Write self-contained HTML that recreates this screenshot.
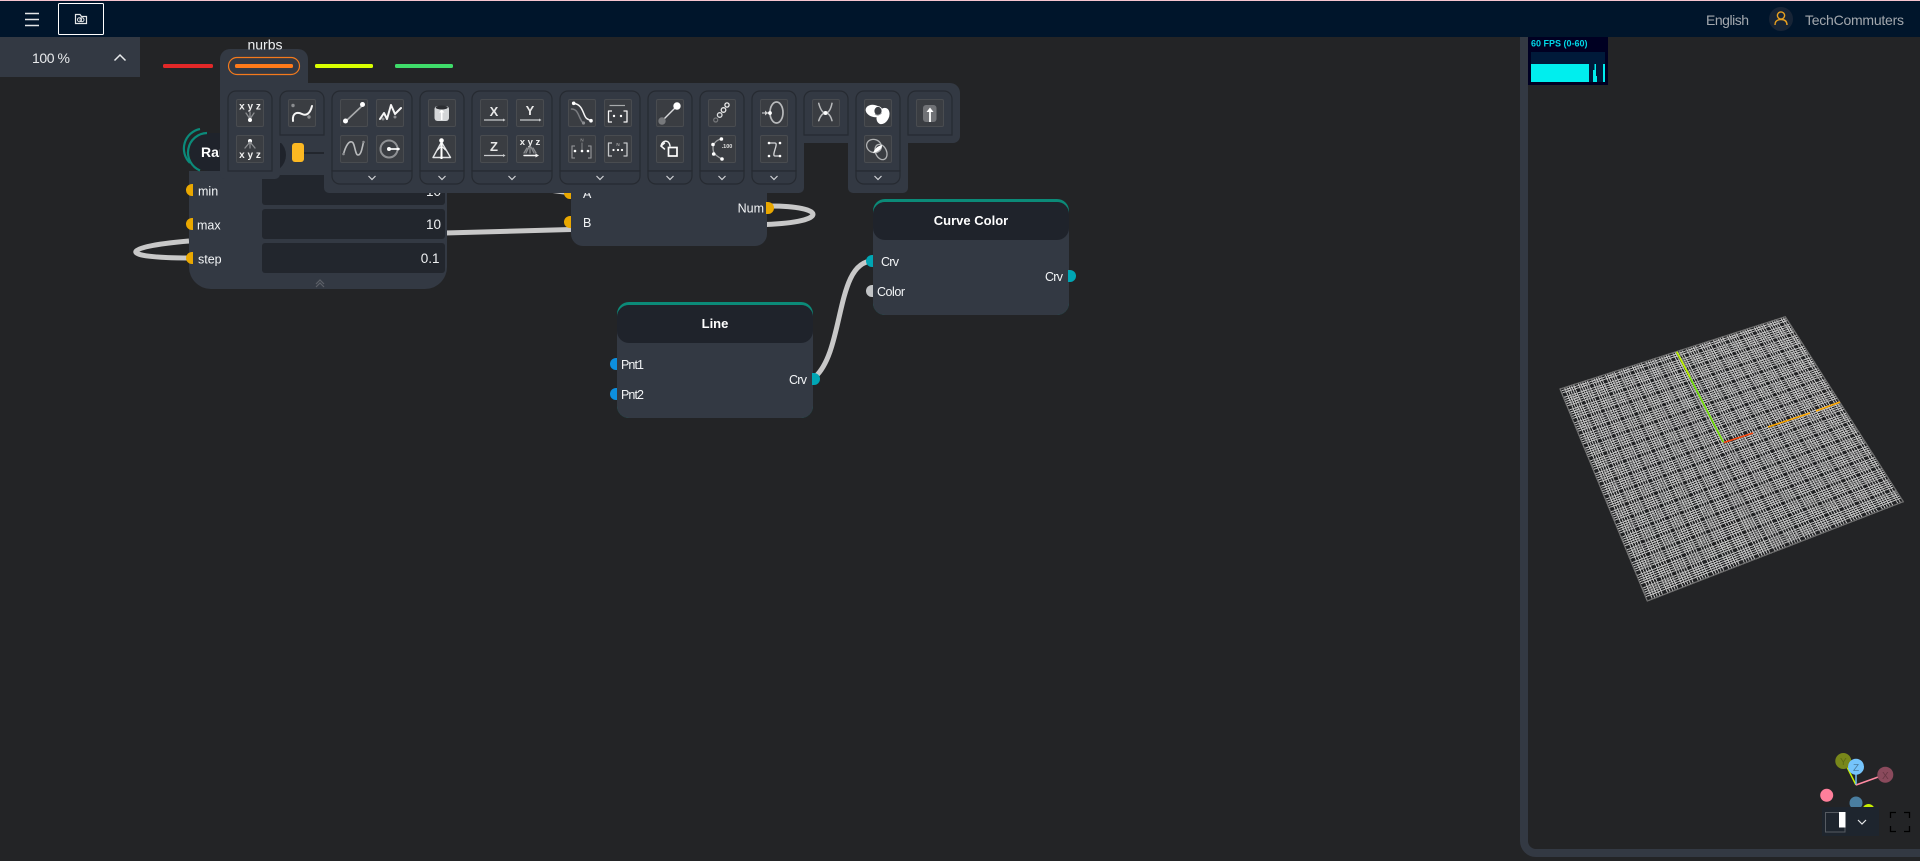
<!DOCTYPE html>
<html><head><meta charset="utf-8"><title>Editor</title>
<style>
html,body{margin:0;padding:0;width:1920px;height:861px;overflow:hidden;background:#232426}
svg{display:block;position:absolute;left:0;top:0}
text{font-family:"Liberation Sans",sans-serif}
.lb{font-size:12.5px;fill:#f2f4f6}
.ttl{font-size:13px;font-weight:700;fill:#fff;text-anchor:middle}
.val{font-size:13.5px;fill:#eef0f2;text-anchor:end}
.wire{fill:none;stroke:#c8c8c8;stroke-width:5;stroke-linecap:butt}
.grp{fill:#333943;stroke:#262a31;stroke-width:1.2}
.t{fill:#3a3d42;stroke:#494c50;stroke-width:1}
.ch{fill:none;stroke:#d0d2d6;stroke-width:1.2}
.w{fill:none;stroke:#f6f6f6;stroke-width:1.8;stroke-linecap:round;stroke-linejoin:round}
.g{fill:none;stroke:#8b8d90;stroke-width:1.3;stroke-linecap:round;stroke-linejoin:round}
.d{fill:#fff}.dg{fill:#8b8d90}
.ic{font-size:10px;font-weight:700;fill:#f0f0f0;text-anchor:middle}
.ib{font-size:13px;font-weight:700;fill:#e8e8e8;text-anchor:middle}
.ar{fill:none;stroke:#c8cacc;stroke-width:1.2}
</style></head><body>
<svg width="1920" height="861" viewBox="0 0 1920 861" xmlns="http://www.w3.org/2000/svg">
<rect width="1920" height="861" fill="#232426"/>

<!-- top bar -->
<rect width="1920" height="37" fill="#00152b"/>
<rect width="1920" height="1" fill="#f5c4cf"/>
<path d="M25 13.5H39M25 19.5H39M25 25.5H39" stroke="#e4e6e8" stroke-width="1.6"/>
<rect x="58.5" y="3.5" width="45" height="31" rx="1" fill="none" stroke="#fff"/>
<path d="M75.5 23.5V14.5H80L81.5 16.5H86.5V23.5Z" fill="none" stroke="#e4e6e8" stroke-width="1.2"/>
<circle cx="79.5" cy="19.7" r="2" fill="none" stroke="#e4e6e8"/><circle cx="82" cy="19.7" r="2" fill="none" stroke="#e4e6e8"/>
<text x="1706" y="25" font-size="14" fill="#a3a8ae" textLength="43">English</text>
<circle cx="1781" cy="19" r="12" fill="#172436"/>
<circle cx="1781" cy="15.5" r="3.6" fill="none" stroke="#e8a020" stroke-width="1.4"/>
<path d="M1775 25C1775 20.5 1778 19.5 1781 19.5S1787 20.5 1787 25" fill="none" stroke="#e8a020" stroke-width="1.4"/>
<text x="1805" y="25" font-size="14" fill="#a3a8ae" textLength="99">TechCommuters</text>

<!-- zoom widget -->
<rect x="0" y="37" width="140" height="40" fill="#333943"/>
<text x="32" y="63" font-size="14" fill="#e8eaec" textLength="38">100 %</text>
<path d="M114.5 60.5L120 55L125.5 60.5" fill="none" stroke="#e8eaec" stroke-width="1.5"/>

<!-- tab bars -->
<rect x="163" y="64" width="50" height="4" rx="1.5" fill="#e22828"/>
<rect x="315" y="64" width="58" height="4" rx="1.5" fill="#d9ff00"/>
<rect x="395" y="64" width="58" height="4" rx="1.5" fill="#3fdc6a"/>

<!-- right viewport frame -->
<path d="M1524 37V841A12 12 0 0 0 1536 853H1920" fill="none" stroke="#333943" stroke-width="8"/>

<!-- fps -->
<rect x="1528" y="37" width="80" height="48" fill="#000022"/>
<text x="1531" y="46.5" font-size="9" font-weight="700" fill="#00d8e8">60 FPS (0-60)</text>
<rect x="1531" y="52" width="74" height="30" fill="#001a3a"/>
<path d="M1531 64H1589V82H1531ZM1593 70H1594.5V82H1593ZM1594.5 64H1596V82H1594.5ZM1596 76H1597V82H1596ZM1603 64H1605V82H1603Z" fill="#00eeee"/>

<!-- grid -->
<g id="grid" stroke="#bcbcbc" stroke-width="1" shape-rendering="crispEdges"></g>
<path d="M1785.3 316.7L1903.3 501.7L1647.3 601L1560 389Z" fill="none" stroke="#6e6e6e" stroke-width="1.2"/>
<path d="M1723.3 442.3L1676.7 351.7" stroke="#6ee000" stroke-width="1.6"/>
<path d="M1690 377L1676.7 351.7" stroke="#c0f000" stroke-width="1.6"/>
<path d="M1724 442.5L1753 433" stroke="#ff4a10" stroke-width="1.6"/>
<path d="M1768 427L1810 413M1816 411L1840 402" stroke="#ffa800" stroke-width="1.6"/>

<!-- gizmo -->
<path d="M1856 785L1846 765" stroke="#c8f000" stroke-width="1.5"/>
<path d="M1856 785L1856 770" stroke="#6fc0f5" stroke-width="1.5"/>
<path d="M1856 785L1881 776" stroke="#ff8aa2" stroke-width="1.5"/>
<circle cx="1843.3" cy="761" r="8" fill="#78871a"/>
<circle cx="1885.3" cy="774.7" r="8" fill="#8a4a5c"/>
<circle cx="1856" cy="766.7" r="8" fill="#75c4fb"/>
<text x="1843.3" y="765" font-size="10" fill="#5d6a14" text-anchor="middle">Y</text>
<text x="1856" y="771" font-size="10" fill="#4a7ea0" text-anchor="middle">Z</text>
<text x="1885.3" y="779" font-size="10" fill="#683644" text-anchor="middle">X</text>
<circle cx="1826.7" cy="795.3" r="6.5" fill="#ff7f9b"/>
<circle cx="1856" cy="803" r="6.5" fill="#4a7ea0"/>
<circle cx="1868.5" cy="810" r="6" fill="#c8f000"/>
<rect x="1822" y="807" width="57" height="29" fill="#1e252e"/>
<rect x="1825.5" y="812.5" width="19.5" height="19.5" fill="none" stroke="#565b62"/>
<rect x="1839" y="812" width="6.5" height="15.5" fill="#fff"/>
<path d="M1858 820L1862 824L1866 820" fill="none" stroke="#e6e8ea" stroke-width="1.2"/>
<path d="M1890.5 818V812.5H1896M1904 812.5H1909.5V818M1909.5 826V831.5H1904M1896 831.5H1890.5V826" fill="none" stroke="#000" stroke-width="1.3"/>

<!-- wires -->
<path class="wire" d="M189 241C118 247 118 258 189 258"/>
<path class="wire" d="M445 233L571 229.5"/>
<path class="wire" d="M530 188L568 193" style="stroke-width:4"/>
<path class="wire" d="M770 206C826 206 830 222 766 224.5"/>
<path class="wire" d="M815 377C845 350 835 261 873 261"/>

<!-- Range node -->
<path d="M200 129A20 20 0 0 0 190 163" fill="none" stroke="#0b8a7a" stroke-width="2.2"/>
<path d="M230 130H447V267A22 22 0 0 1 425 289H211A22 22 0 0 1 189 267V171H230Z" fill="#333943"/>
<ellipse cx="265" cy="155" rx="21" ry="19" fill="#1f232b"/>
<path d="M209 133H265V171H209A19 19 0 0 1 209 133Z" fill="#1f232b"/>
<path d="M207 133A19.5 19.5 0 0 0 200 170.5" fill="none" stroke="#0b8a7a" stroke-width="2.2"/>
<text x="201" y="157" font-size="14" font-weight="700" fill="#fff">Range</text>
<rect x="262" y="175" width="183" height="30" rx="3" fill="#22262d"/>
<rect x="262" y="209" width="183" height="30" rx="3" fill="#22262d"/>
<rect x="262" y="243" width="183" height="30" rx="3" fill="#22262d"/>
<rect x="292" y="143" width="12" height="19" rx="3" fill="#fcb822"/>
<rect x="304" y="152" width="21" height="2" fill="#22262d"/>
<text class="val" x="441" y="196">10</text>
<text class="val" x="441" y="229">10</text>
<text class="val" x="439.5" y="263">0.1</text>
<text class="lb" x="198" y="195.5">min</text>
<text class="lb" x="197" y="229.5">max</text>
<text class="lb" x="198" y="263.5">step</text>
<path d="M193 184H192A6 6 0 0 0 192 196H193ZM193 218H192A6 6 0 0 0 192 230H193ZM193 252H192A6 6 0 0 0 192 264H193Z" fill="#eaa800"/>
<path d="M316 284L320 280L324 284M316 287L320 283L324 287" fill="none" stroke="#5c6068" stroke-width="1.2"/>

<!-- node A/B -->
<path d="M571 160H767V234A12 12 0 0 1 755 246H583A12 12 0 0 1 571 234Z" fill="#333943"/>
<text class="lb" x="583" y="198">A</text>
<text class="lb" x="583" y="227">B</text>
<text class="lb" x="764" y="212.5" text-anchor="end">Num</text>
<path d="M571 187H570A6 6 0 0 0 570 199H571ZM571 216H570A6 6 0 0 0 570 228H571Z" fill="#eaa800"/>
<path d="M766 202H768A6 6 0 0 1 768 214H766Z" fill="#eaa800"/>

<!-- Curve Color -->
<path d="M873 211A12 12 0 0 1 885 199H1057A12 12 0 0 1 1069 211V303A12 12 0 0 1 1057 315H885A12 12 0 0 1 873 303Z" fill="#0b8a78"/>
<path d="M873 214A12 12 0 0 1 885 202H1057A12 12 0 0 1 1069 214V303A12 12 0 0 1 1057 315H885A12 12 0 0 1 873 303Z" fill="#333943"/>
<path d="M873 214A12 12 0 0 1 885 202H1057A12 12 0 0 1 1069 214V228A12 12 0 0 1 1057 240H885A12 12 0 0 1 873 228Z" fill="#1f232b"/>
<text class="ttl" x="971" y="225">Curve Color</text>
<text class="lb" x="881" y="266" textLength="18">Crv</text>
<text class="lb" x="877" y="296" textLength="28">Color</text>
<text class="lb" x="1045" y="281" textLength="18">Crv</text>
<path d="M873 255H872A6 6 0 0 0 872 267H873Z" fill="#00a6b4"/>
<path d="M873 285H872A6 6 0 0 0 872 297H873Z" fill="#c2c4c6"/>
<path d="M1068 270H1070A6 6 0 0 1 1070 282H1068Z" fill="#00a6b4"/>

<!-- Line -->
<path d="M617 314A12 12 0 0 1 629 302H801A12 12 0 0 1 813 314V406A12 12 0 0 1 801 418H629A12 12 0 0 1 617 406Z" fill="#0b8a78"/>
<path d="M617 317A12 12 0 0 1 629 305H801A12 12 0 0 1 813 317V406A12 12 0 0 1 801 418H629A12 12 0 0 1 617 406Z" fill="#333943"/>
<path d="M617 317A12 12 0 0 1 629 305H801A12 12 0 0 1 813 317V331A12 12 0 0 1 801 343H629A12 12 0 0 1 617 331Z" fill="#1f232b"/>
<text class="ttl" x="715" y="328">Line</text>
<text class="lb" x="621" y="369" textLength="23">Pnt1</text>
<text class="lb" x="621" y="399" textLength="23">Pnt2</text>
<text class="lb" x="789" y="384" textLength="18">Crv</text>
<path d="M617 358H616A6 6 0 0 0 616 370H617Z" fill="#0c8fdf"/>
<path d="M617 388H616A6 6 0 0 0 616 400H617Z" fill="#0c8fdf"/>
<path d="M812 373H814A6 6 0 0 1 814 385H812Z" fill="#00a6b4"/>

<!-- tool panel -->
<path d="M230 49H298A10 10 0 0 1 308 59V83H950A10 10 0 0 1 960 93V136A7 7 0 0 1 953 143H908V188A5 5 0 0 1 903 193H853A5 5 0 0 1 848 188V143H804V188A5 5 0 0 1 799 193H329A5 5 0 0 1 324 188V143H280V174A5 5 0 0 1 275 179H225A5 5 0 0 1 220 174V59A10 10 0 0 1 230 49Z" fill="#333943"/>
<text x="265" y="49.5" font-size="14" fill="#eef0f2" text-anchor="middle">nurbs</text>
<rect x="228.5" y="57.5" width="71" height="17" rx="8.5" fill="none" stroke="#f47a1c" stroke-width="1.2"/>
<rect x="235" y="64" width="58" height="4" rx="1.5" fill="#ff7a1a"/>

<!-- groups -->
<path class="grp" d="M228 171V99A8 8 0 0 1 236 91H264A8 8 0 0 1 272 99V171Z"/>
<path class="grp" d="M280 135V99A8 8 0 0 1 288 91H316A8 8 0 0 1 324 99V135Z"/>
<path class="grp" d="M332 171V99A8 8 0 0 1 340 91H404A8 8 0 0 1 412 99V171Z"/>
<path class="grp" d="M420 171V99A8 8 0 0 1 428 91H456A8 8 0 0 1 464 99V171Z"/>
<path class="grp" d="M472 171V99A8 8 0 0 1 480 91H544A8 8 0 0 1 552 99V171Z"/>
<path class="grp" d="M560 171V99A8 8 0 0 1 568 91H632A8 8 0 0 1 640 99V171Z"/>
<path class="grp" d="M648 171V99A8 8 0 0 1 656 91H684A8 8 0 0 1 692 99V171Z"/>
<path class="grp" d="M700 171V99A8 8 0 0 1 708 91H736A8 8 0 0 1 744 99V171Z"/>
<path class="grp" d="M752 171V99A8 8 0 0 1 760 91H788A8 8 0 0 1 796 99V171Z"/>
<path class="grp" d="M804 135V99A8 8 0 0 1 812 91H840A8 8 0 0 1 848 99V135Z"/>
<path class="grp" d="M856 171V99A8 8 0 0 1 864 91H892A8 8 0 0 1 900 99V171Z"/>
<path class="grp" d="M908 135V99A8 8 0 0 1 916 91H944A8 8 0 0 1 952 99V135Z"/>
<!-- footers -->
<path class="grp" d="M332 171V176A8 8 0 0 0 340 184H404A8 8 0 0 0 412 176V171ZM420 171V176A8 8 0 0 0 428 184H456A8 8 0 0 0 464 176V171ZM472 171V176A8 8 0 0 0 480 184H544A8 8 0 0 0 552 176V171ZM560 171V176A8 8 0 0 0 568 184H632A8 8 0 0 0 640 176V171ZM648 171V176A8 8 0 0 0 656 184H684A8 8 0 0 0 692 176V171ZM700 171V176A8 8 0 0 0 708 184H736A8 8 0 0 0 744 176V171ZM752 171V176A8 8 0 0 0 760 184H788A8 8 0 0 0 796 176V171ZM856 171V176A8 8 0 0 0 864 184H892A8 8 0 0 0 900 176V171Z"/>
<path class="ch" d="M368.5 176L372 179.5L375.5 176M438.5 176L442 179.5L445.5 176M508.5 176L512 179.5L515.5 176M596.5 176L600 179.5L603.5 176M666.5 176L670 179.5L673.5 176M718.5 176L722 179.5L725.5 176M770.5 176L774 179.5L777.5 176M874.5 176L878 179.5L881.5 176"/>

<!-- tiles -->
<g>
<rect class="t" x="236.5" y="99.5" width="27" height="27" rx="1.5"/>
<rect class="t" x="236.5" y="135.5" width="27" height="27" rx="1.5"/>
<rect class="t" x="288.5" y="99.5" width="27" height="27" rx="1.5"/>
<rect class="t" x="340.5" y="99.5" width="27" height="27" rx="1.5"/>
<rect class="t" x="376.5" y="99.5" width="27" height="27" rx="1.5"/>
<rect class="t" x="340.5" y="135.5" width="27" height="27" rx="1.5"/>
<rect class="t" x="376.5" y="135.5" width="27" height="27" rx="1.5"/>
<rect class="t" x="428.5" y="99.5" width="27" height="27" rx="1.5"/>
<rect class="t" x="428.5" y="135.5" width="27" height="27" rx="1.5"/>
<rect class="t" x="480.5" y="99.5" width="27" height="27" rx="1.5"/>
<rect class="t" x="516.5" y="99.5" width="27" height="27" rx="1.5"/>
<rect class="t" x="480.5" y="135.5" width="27" height="27" rx="1.5"/>
<rect class="t" x="516.5" y="135.5" width="27" height="27" rx="1.5"/>
<rect class="t" x="568.5" y="99.5" width="27" height="27" rx="1.5"/>
<rect class="t" x="604.5" y="99.5" width="27" height="27" rx="1.5"/>
<rect class="t" x="568.5" y="135.5" width="27" height="27" rx="1.5"/>
<rect class="t" x="604.5" y="135.5" width="27" height="27" rx="1.5"/>
<rect class="t" x="656.5" y="99.5" width="27" height="27" rx="1.5"/>
<rect class="t" x="656.5" y="135.5" width="27" height="27" rx="1.5"/>
<rect class="t" x="708.5" y="99.5" width="27" height="27" rx="1.5"/>
<rect class="t" x="708.5" y="135.5" width="27" height="27" rx="1.5"/>
<rect class="t" x="760.5" y="99.5" width="27" height="27" rx="1.5"/>
<rect class="t" x="760.5" y="135.5" width="27" height="27" rx="1.5"/>
<rect class="t" x="812.5" y="99.5" width="27" height="27" rx="1.5"/>
<rect class="t" x="864.5" y="99.5" width="27" height="27" rx="1.5"/>
<rect class="t" x="864.5" y="135.5" width="27" height="27" rx="1.5"/>
<rect class="t" x="916.5" y="99.5" width="27" height="27" rx="1.5"/>
</g>

<!-- icons -->
<g transform="translate(236 99)"><text class="ic" x="14" y="10.5">x y z</text><path class="g" d="M14 13V20M10 14L14 20M18 14L14 20"/><circle class="d" cx="14" cy="21" r="2"/></g>
<g transform="translate(236 135)"><circle class="d" cx="14" cy="6" r="2"/><path class="g" d="M14 8V13M9 13L14 7M19 13L14 7"/><text class="ic" x="14" y="23">x y z</text></g>
<g transform="translate(288 99)"><path class="w" d="M5 22C4 13 10 13 14 15S22 15 24 7" style="stroke-width:2"/><circle class="dg" cx="5" cy="6.5" r="1.7"/><circle class="dg" cx="21" cy="18" r="1.7"/></g>
<g transform="translate(340 99)"><path d="M6 22L23 6" stroke="#a8aaac" stroke-width="1.6"/><circle class="d" cx="5.5" cy="22" r="2.5"/><circle class="d" cx="22.5" cy="5.5" r="2.5"/></g>
<g transform="translate(376 99)"><path class="w" d="M4 20L8 14L11 20L15 6L19 15L25 9" style="stroke-width:2"/><circle class="dg" cx="7" cy="20" r="1.5"/><circle class="dg" cx="19" cy="18" r="1.5"/></g>
<g transform="translate(340 135)"><path class="g" d="M3.5 19C6 10 9 6 12 7S15 20 18 20 22 14 23.5 7" style="stroke:#b8babc;stroke-width:1.6"/><circle class="dg" cx="3.5" cy="19" r="1.3"/><circle class="dg" cx="23.5" cy="7" r="1.3"/></g>
<g transform="translate(376 135)"><circle cx="13" cy="14" r="8.5" fill="none" stroke="#8f9194" stroke-width="2"/><path class="w" d="M13 14H23"/><circle class="d" cx="13" cy="14" r="2"/><circle class="d" cx="22" cy="14" r="1.4"/></g>
<g transform="translate(428 99)"><rect x="6.5" y="7" width="14.5" height="15" rx="3" fill="#d4d6d8"/><ellipse cx="13.7" cy="8.5" rx="6" ry="2" fill="#2c2e32"/><path d="M13.7 11V21" stroke="#fff" stroke-width="1.6"/><path d="M11 13.5L13.7 10.5L16.5 13.5Z" fill="#fff"/></g>
<g transform="translate(428 135)"><path class="w" d="M13.5 7L5 22.5H22.5Z" style="stroke:#e2e4e6;stroke-width:1.4"/><path d="M13.5 8V24" stroke="#fff" stroke-width="2"/><circle class="d" cx="13.5" cy="5.5" r="2.3"/><path class="w" d="M9.5 15L13.5 11L17.5 15" style="stroke-width:1.2"/></g>
<g transform="translate(480 99)"><text class="ib" x="14" y="17">X</text><path class="ar" d="M4 21H23"/><path d="M23 19.5L25.5 21L23 22.5Z" fill="#c8cacc"/></g>
<g transform="translate(516 99)"><text class="ib" x="14" y="16">Y</text><path class="ar" d="M4 21H23"/><path d="M23 19.5L25.5 21L23 22.5Z" fill="#c8cacc"/></g>
<g transform="translate(480 135)"><text class="ib" x="14" y="16">Z</text><path class="ar" d="M4 20.5H23"/><path d="M23 19L25.5 20.5L23 22Z" fill="#c8cacc"/></g>
<g transform="translate(516 135)"><text class="ic" x="14" y="10" style="font-size:9.5px">x y z</text><path class="g" d="M10 18L13 12M14 18V12M18 18L15 12M8 18L11 13M20 18L17 13"/><path class="w" d="M8 20.5H20" style="stroke-width:1.4"/><path d="M19.5 18.5L23 20.5L19.5 22.5Z" fill="#f2f2f2"/></g>
<g transform="translate(568 99)"><path class="g" d="M3.5 10C9 10 10 15 12 19S14 23 15.5 24" style="stroke:#7a7c80;stroke-width:1.5"/><circle class="dg" cx="15.5" cy="24" r="1.6"/><path class="w" d="M6 4.5C12 5 14 10 16 15S19 20 23 21.5" style="stroke-width:1.5"/><circle class="d" cx="5.7" cy="4.3" r="1.8"/><circle class="d" cx="23" cy="21.7" r="1.8"/></g>
<g transform="translate(604 99)"><path d="M5.5 6.5H21" stroke="#a8aaac" stroke-width="1.2"/><path class="w" d="M8 12H4.5V23H8M19.5 12H23V23H19.5" style="stroke-width:1.3;stroke-linecap:butt"/><circle class="d" cx="10" cy="17" r="1.2"/><circle class="d" cx="17" cy="17" r="1.2"/></g>
<g transform="translate(568 135)"><path class="g" d="M7 11H4V23H7M20 11H23V23H20" style="stroke-linecap:butt"/><path class="g" d="M14 8V15" style="stroke-width:.9"/><text x="14" y="6.5" font-size="4.5" fill="#aaa" text-anchor="middle">N</text><circle class="d" cx="7" cy="16" r="1.3"/><circle class="d" cx="14" cy="16" r="1.3"/><circle class="d" cx="20" cy="16" r="1.3"/></g>
<g transform="translate(604 135)"><path class="w" d="M8 8H4.5V21H8M19.5 8H23V21H19.5" style="stroke:#c4c6c8;stroke-width:1.3;stroke-linecap:butt"/><text x="14" y="11" font-size="4.5" fill="#ccc" text-anchor="middle">N</text><circle class="d" cx="9.5" cy="15" r="1.1"/><circle class="d" cx="14" cy="15" r="1.1"/><circle class="d" cx="18" cy="15" r="1.1"/></g>
<g transform="translate(656 99)"><path d="M6 22L21 7" stroke="#dadcde" stroke-width="1.4"/><circle cx="6" cy="22" r="3.7" fill="#77797c"/><circle class="d" cx="21" cy="7" r="3.7"/></g>
<g transform="translate(656 135)"><path class="w" d="M5 11L8.5 8M5 11L8.5 14" style="stroke-width:1.5"/><path class="w" d="M5 11C6 5 13 4 14 11" style="stroke-width:1.5"/><rect x="12.5" y="12.5" width="8.5" height="8.5" fill="none" stroke="#fff" stroke-width="1.7"/></g>
<g transform="translate(708 99)"><circle cx="7.7" cy="21" r="2" fill="none" stroke="#77797c" stroke-width="1.2"/><circle cx="11.7" cy="16" r="2.3" fill="none" stroke="#dadcde" stroke-width="1.3"/><circle cx="15.5" cy="11" r="2.3" fill="none" stroke="#e8e8e8" stroke-width="1.3"/><circle cx="19" cy="6" r="2.1" fill="none" stroke="#eee" stroke-width="1.3"/></g>
<g transform="translate(708 135)"><path class="g" d="M13.4 4C8 5 5 9 5 13S6 20 14 24" style="stroke:#a0a2a4"/><circle class="d" cx="13.4" cy="4" r="1.8"/><circle class="d" cx="5" cy="9.5" r="1.8"/><circle class="d" cx="5.7" cy="19" r="1.8"/><circle class="d" cx="14" cy="24" r="1.8"/><text x="19" y="13" font-size="5.5" font-weight="700" fill="#e0e0e0" text-anchor="middle">.100</text></g>
<g transform="translate(760 99)"><ellipse cx="16.5" cy="13.5" rx="6.5" ry="10.5" fill="none" stroke="#b8babc" stroke-width="1.7"/><path d="M2 14H10" stroke="#c0c2c4" stroke-width="1.2"/><circle class="d" cx="10" cy="14" r="1.9"/><path d="M5 11.5L8 14L5 16.5Z" fill="#ccc"/></g>
<g transform="translate(760 135)"><path class="w" d="M9 8H15C19 8 11 21 15 21H20" style="stroke:#d4d6d8;stroke-width:1.3"/><circle class="d" cx="9" cy="8" r="1.3"/><circle class="d" cx="20" cy="8" r="1.3"/><circle class="d" cx="9" cy="21" r="1.3"/><circle class="d" cx="20" cy="21" r="1.3"/></g>
<g transform="translate(812 99)"><path class="g" d="M6.7 4.3C8 9 10 14 13.5 14S19 9 20 4.3M6.7 21.7C8 18 10 14 13.5 14S19 18 20 21.7" style="stroke:#b8babc;stroke-width:1.5"/><circle class="d" cx="13.5" cy="14" r="2"/></g>
<g transform="translate(864 99)"><ellipse cx="10" cy="12" rx="8.5" ry="6" fill="#fff" transform="rotate(15 10 12)"/><ellipse cx="19" cy="17" rx="6" ry="8.5" fill="#fff" transform="rotate(25 19 17)"/><ellipse cx="14" cy="12" rx="4" ry="4.5" fill="#3a3d42" stroke="#fff" stroke-width=".8"/><path d="M11 15C13 17 16 16 17.5 14" stroke="#9a9c9e" fill="none"/></g>
<g transform="translate(864 135)"><ellipse cx="10" cy="11" rx="7.5" ry="6.5" fill="none" stroke="#b0b2b4" stroke-width="1.3" transform="rotate(20 10 11)"/><ellipse cx="17" cy="17" rx="5.5" ry="8" fill="none" stroke="#b0b2b4" stroke-width="1.3" transform="rotate(-25 17 17)"/><path d="M9 18C11 13 14 11 18 10 18 14 14 17 9 18Z" fill="#fff"/></g>
<g transform="translate(916 99)"><rect x="7" y="6" width="13.5" height="17" rx="3" fill="#707276"/><path d="M14 10V23" stroke="#fff" stroke-width="1.8"/><path d="M10.5 13L14 8.5L17.5 13Z" fill="#fff"/></g>
</svg>
<script>
(function(){
var A=[1785.3,316.7],B=[1903.3,501.7],C=[1647.3,601],D=[1560,389],N=100,s='';
function L(p,q,t){return [p[0]+(q[0]-p[0])*t,p[1]+(q[1]-p[1])*t];}
for(var i=0;i<=N;i++){
if(i%6==3)continue;
var t=i/N,p=L(A,B,t),q=L(D,C,t),r=L(A,D,t),u=L(B,C,t);
s+='M'+p[0].toFixed(1)+' '+p[1].toFixed(1)+'L'+q[0].toFixed(1)+' '+q[1].toFixed(1);
s+='M'+r[0].toFixed(1)+' '+r[1].toFixed(1)+'L'+u[0].toFixed(1)+' '+u[1].toFixed(1);}
var e=document.createElementNS('http://www.w3.org/2000/svg','path');
e.setAttribute('d',s);e.setAttribute('fill','none');
document.getElementById('grid').appendChild(e);
})();
</script>
</body></html>
